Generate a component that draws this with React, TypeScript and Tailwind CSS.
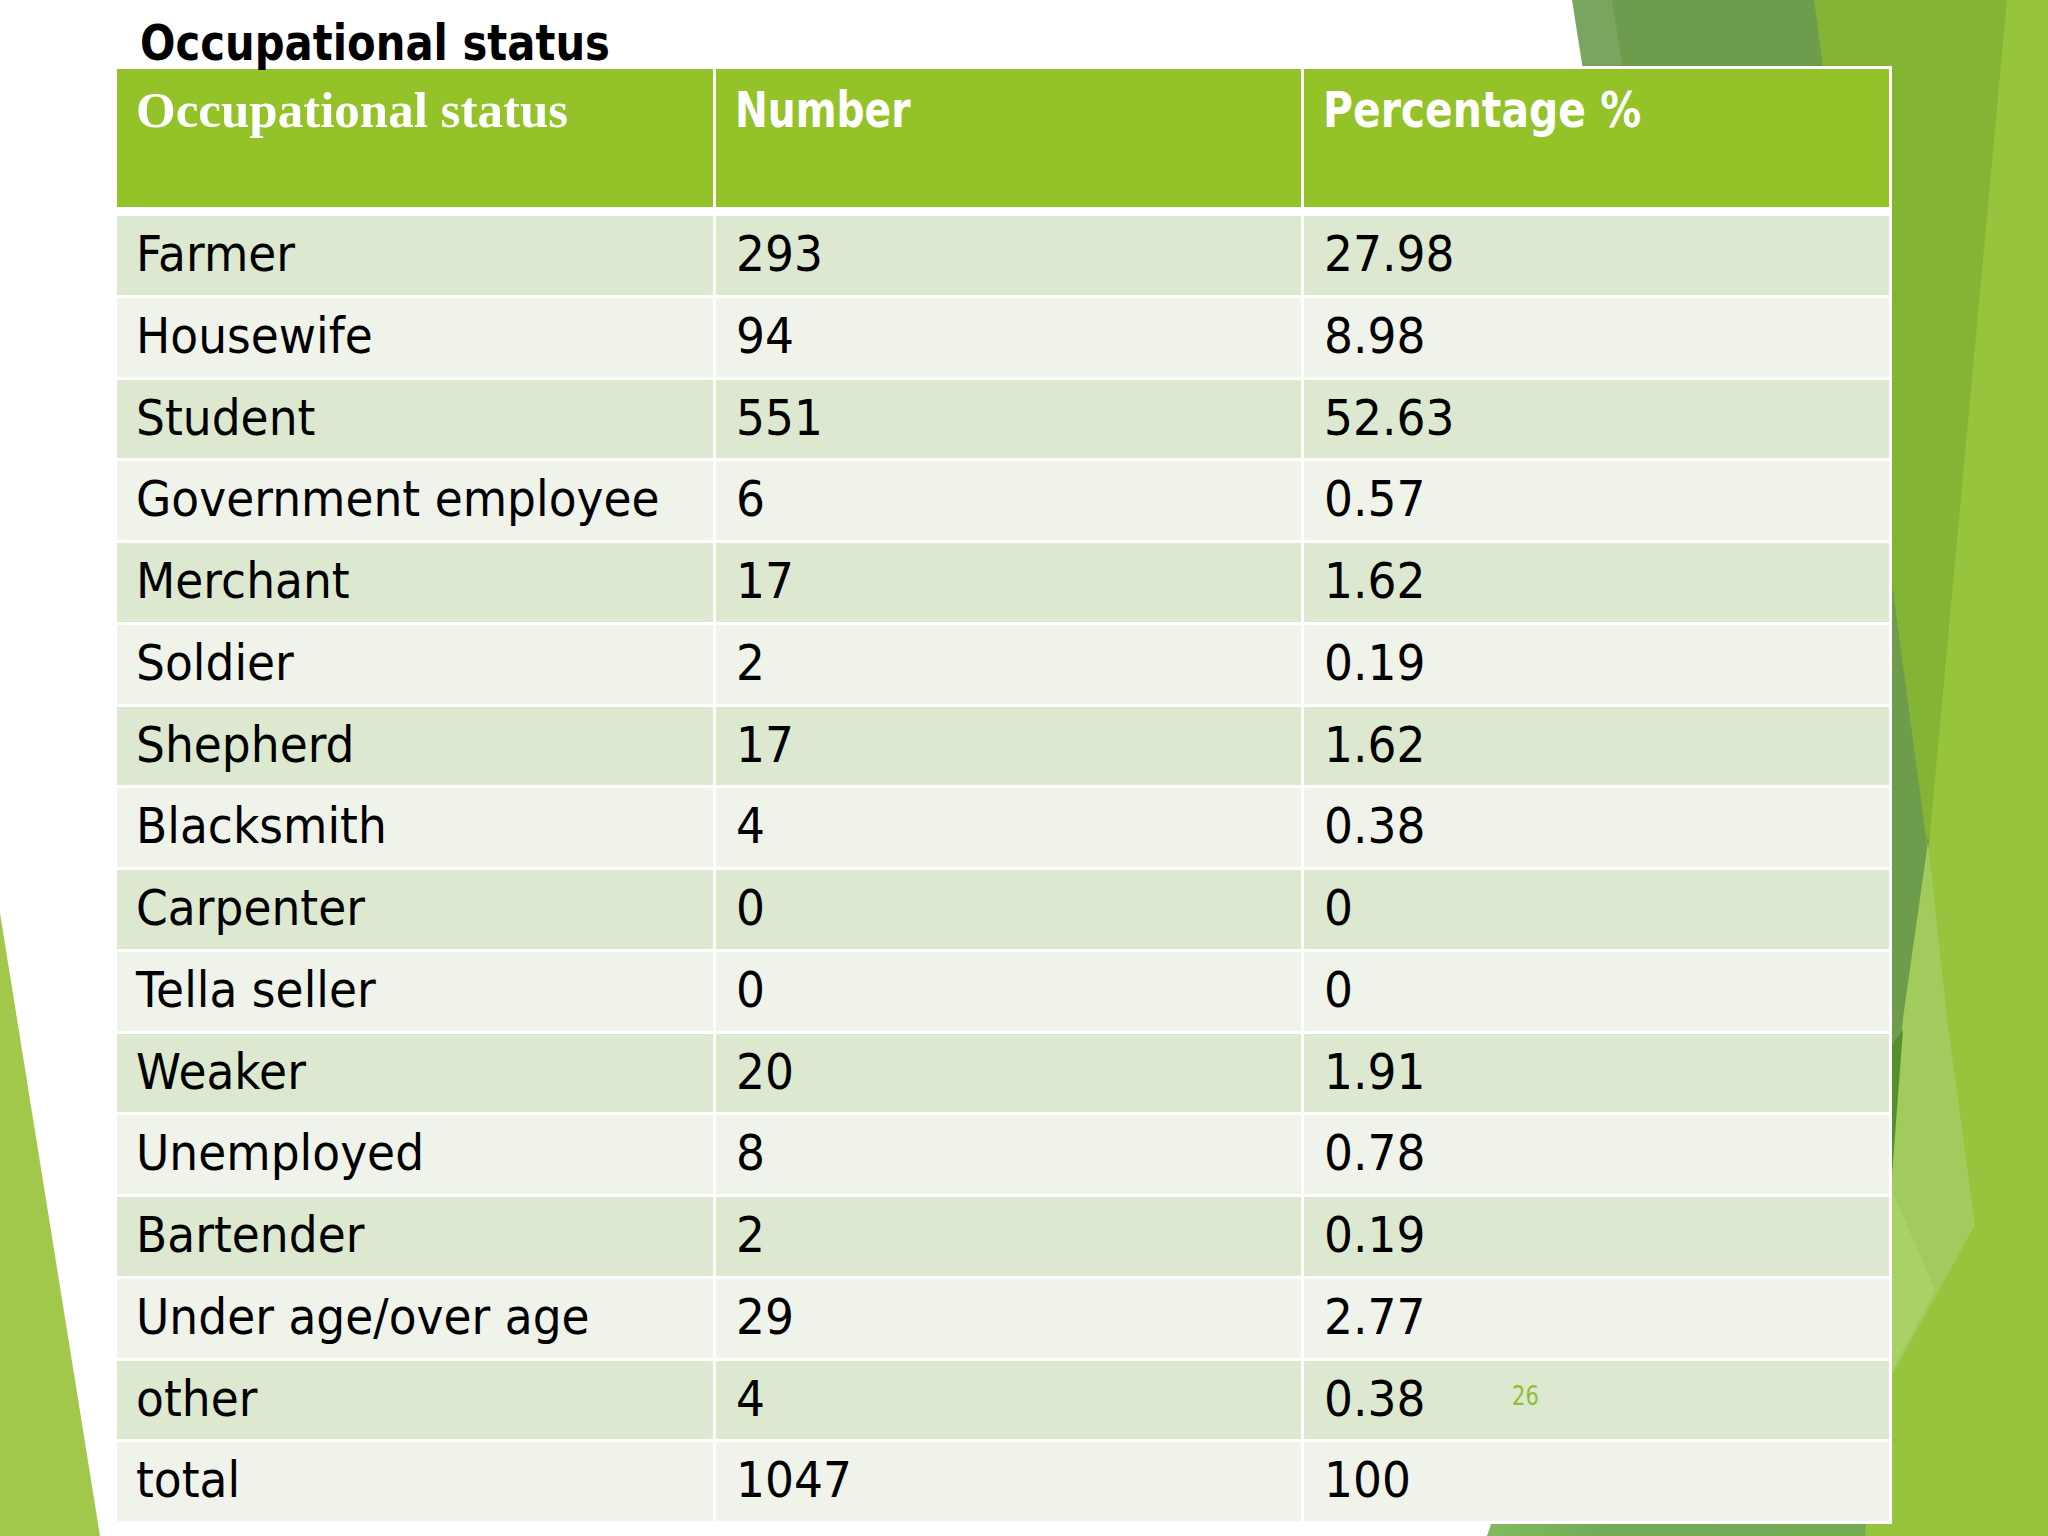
import React from "react";

const rows: [string, string, string][] = [
  ["Farmer", "293", "27.98"],
  ["Housewife", "94", "8.98"],
  ["Student", "551", "52.63"],
  ["Government employee", "6", "0.57"],
  ["Merchant", "17", "1.62"],
  ["Soldier", "2", "0.19"],
  ["Shepherd", "17", "1.62"],
  ["Blacksmith", "4", "0.38"],
  ["Carpenter", "0", "0"],
  ["Tella seller", "0", "0"],
  ["Weaker", "20", "1.91"],
  ["Unemployed", "8", "0.78"],
  ["Bartender", "2", "0.19"],
  ["Under age/over age", "29", "2.77"],
  ["other", "4", "0.38"],
  ["total", "1047", "100"],
];

function Background() {
  return (
    <svg
      className="absolute inset-0"
      width="2048"
      height="1536"
      viewBox="0 0 2048 1536"
    >
      <defs>
        <linearGradient id="bottomBand" x1="0" y1="0" x2="1" y2="0">
          <stop offset="0" stopColor="#82BA5F" />
          <stop offset="0.3" stopColor="#73AA55" />
          <stop offset="1" stopColor="#74AB52" />
        </linearGradient>
      </defs>
      <polygon points="0,913 100,1536 0,1536" fill="#A1C84B" />
      <polygon
        points="1576,0 2048,0 2048,1536 1487,1536 1499,1521 1596,66"
        fill="#84B434"
      />
      <polygon points="1499,1500 1900,1500 1900,1536 1487,1536" fill="url(#bottomBand)" />
      <polygon points="1572,0 1614,0 1700,560 1660,560" fill="#7AA55F" />
      <polygon
        points="1612,0 1816,0 1929,842 1906,1100 1885,1420 1700,560"
        fill="#6E9C4D"
      />
      <polygon points="1814,0 2009,0 1927,845" fill="#84B434" />
      <polygon points="2007,0 2048,0 2048,1536 1865,1536" fill="#96C43C" />
      <polygon
        points="1928,842 1947,1018 1975,1225 1892,1375 1892,1150 1903,1018"
        fill="#A2CB5D"
      />
      <polygon points="1892,1190 1935,1290 1892,1370" fill="#A9D166" />
      <polygon points="1892,1045 1903,1030 1892,1175" fill="#55902C" />
    </svg>
  );
}

export default function App() {
  return (
    <div className="relative w-[2048px] h-[1536px] overflow-hidden bg-white">
      <Background />
      <div className="relative">
        <div className="h-[66px] pt-[18px] pl-[140px]">
          <span className="inline-block origin-left [transform:scaleX(0.835)] whitespace-nowrap font-['DejaVu_Sans',sans-serif] font-bold text-[50px] leading-none text-black">
            Occupational status
          </span>
        </div>
        <div className="ml-[114px] w-[1778px] bg-white p-[3px]">
          <div className="grid grid-cols-[596px_585px_585px] gap-x-[3px] h-[138px]">
            <div className="bg-[#93C229] pl-[19px] pt-[16px]">
              <span className="inline-block whitespace-nowrap font-['Liberation_Serif',serif] font-bold text-[51px] leading-none text-white">
                Occupational status
              </span>
            </div>
            <div className="bg-[#93C229] pl-[19px] pt-[17px]">
              <span className="inline-block origin-left [transform:scaleX(0.8)] whitespace-nowrap font-['DejaVu_Sans',sans-serif] font-bold text-[49px] leading-none text-white">
                Number
              </span>
            </div>
            <div className="bg-[#93C229] pl-[19px] pt-[17px]">
              <span className="inline-block origin-left [transform:scaleX(0.834)] whitespace-nowrap font-['DejaVu_Sans',sans-serif] font-bold text-[49px] leading-none text-white">
                Percentage %
              </span>
            </div>
          </div>
          <div className="mt-[9px] grid grid-cols-[596px_585px_585px] auto-rows-[78.75px] gap-x-[3px] gap-y-[3px]">
            {rows.map((r, i) =>
              r.map((c, j) => (
                <div
                  key={`${i}-${j}`}
                  className={`${i % 2 === 0 ? "bg-[#DDE8D0]" : "bg-[#EFF3EA]"} ${j === 0 ? "pl-[19px]" : "pl-[20px]"} pt-[14px]`}
                >
                  <span className="inline-block origin-left [transform:scaleX(0.93)] whitespace-nowrap font-['DejaVu_Sans',sans-serif] text-[49px] leading-none text-black">
                    {c}
                  </span>
                </div>
              ))
            )}
          </div>
        </div>
      </div>
      <div className="absolute left-[1512px] top-[1382px]">
        <span className="inline-block origin-left [transform:scaleX(0.78)] font-['DejaVu_Sans',sans-serif] text-[27px] leading-none text-[#8FBF33]">
          26
        </span>
      </div>
    </div>
  );
}
